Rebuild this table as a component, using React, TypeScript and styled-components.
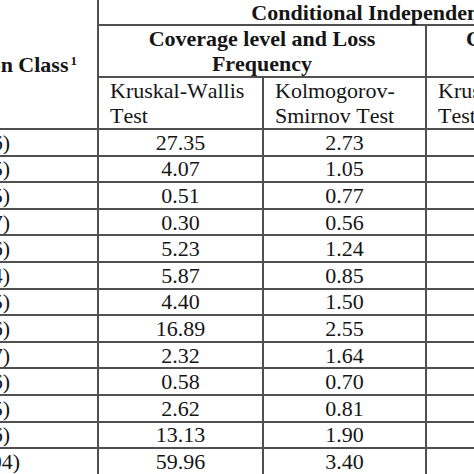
import React from "react";
import styled, { createGlobalStyle } from "styled-components";

const GlobalStyle = createGlobalStyle`
  html, body {
    margin: 0;
    padding: 0;
    background: #fff;
  }
  body {
    font-family: "Liberation Serif", "Times New Roman", serif;
    color: #151515;
    font-kerning: none;
  }
`;

type Row = {
  label: string;
  values: string[];
  total?: boolean;
};

const rows: Row[] = [
  { label: "Class A (2,186)", values: ["27.35", "2.73", "18.42", "2.21"] },
  { label: "Class B (1,035)", values: ["4.07", "1.05", "3.16", "0.98"] },
  { label: "Class C (745)", values: ["0.51", "0.77", "1.12", "0.64"] },
  { label: "Class D (517)", values: ["0.30", "0.56", "0.47", "0.52"] },
  { label: "Class E (906)", values: ["5.23", "1.24", "4.81", "1.17"] },
  { label: "Class F (1,214)", values: ["5.87", "0.85", "6.02", "1.03"] },
  { label: "Class G (835)", values: ["4.40", "1.50", "3.74", "1.28"] },
  { label: "Class H (1,476)", values: ["16.89", "2.55", "12.06", "2.10"] },
  { label: "Class I (657)", values: ["2.32", "1.64", "2.05", "1.31"] },
  { label: "Class J (386)", values: ["0.58", "0.70", "0.92", "0.61"] },
  { label: "Class K (455)", values: ["2.62", "0.81", "1.98", "0.77"] },
  { label: "Class L (1,126)", values: ["13.13", "1.90", "10.44", "1.69"] },
  { label: "All (11,604)", values: ["59.96", "3.40", "48.27", "3.02"], total: true },
];

const App: React.FC = () => {
  return (
    <>
      <GlobalStyle />
      <Viewport>
        <Sheet>
          <CornerHead>
            Production Class<Sup>1</Sup>
          </CornerHead>
          <GroupHead $span={4} $shift={14}>
            Conditional Independence Statistics
          </GroupHead>
          <GroupHead $span={2}>
            Coverage level and Loss
            <br />
            Frequency
          </GroupHead>
          <GroupHead $span={2}>
            Coverage level and Claims
            <br />
            Severity
          </GroupHead>
          <TestHead>Kruskal-Wallis Test</TestHead>
          <TestHead>Kolmogorov-Smirnov Test</TestHead>
          <TestHead>Kruskal-Wallis Test</TestHead>
          <TestHead>Kolmogorov-Smirnov Test</TestHead>
          {rows.map((r) => (
            <React.Fragment key={r.label}>
              <LabelCell $total={r.total}>{r.label}</LabelCell>
              {r.values.map((v, i) => (
                <NumCell key={i}>{v}</NumCell>
              ))}
            </React.Fragment>
          ))}
        </Sheet>
      </Viewport>
    </>
  );
};

const Viewport = styled.div`
  width: 474px;
  height: 474px;
  overflow: hidden;
  background: #fff;
`;

const Sheet = styled.div`
  display: grid;
  grid-template-columns: 300px 165px 163px 165px 165px;
  grid-template-rows: 26px 52px 52px repeat(13, 26.6px);
  margin-left: -201px;
  width: max-content;
  font-size: 22px;
`;

const Cell = styled.div`
  box-sizing: border-box;
  border-right: 2px solid #505050;
  border-bottom: 2px solid #505050;
  display: flex;
  align-items: center;
  line-height: 25px;
  white-space: nowrap;
`;

const CornerHead = styled(Cell)`
  grid-row: 1 / span 3;
  justify-content: flex-end;
  padding-right: 20px;
  font-weight: bold;
`;

const Sup = styled.sup`
  font-size: 13px;
  line-height: 0;
  margin-left: 2px;
  position: relative;
  top: -3px;
`;

const GroupHead = styled(Cell)<{ $span: number; $shift?: number }>`
  grid-column: span ${(p) => p.$span};
  justify-content: center;
  text-align: center;
  font-weight: bold;
  padding-right: ${(p) => p.$shift ?? 0}px;
`;

const TestHead = styled(Cell)`
  white-space: normal;
  padding: 0 6px 0 11px;
`;

const LabelCell = styled(Cell)<{ $total?: boolean }>`
  justify-content: flex-end;
  padding-right: ${(p) => (p.$total ? "77px" : "87px")};
`;

const NumCell = styled(Cell)`
  justify-content: center;
`;

export default App;
